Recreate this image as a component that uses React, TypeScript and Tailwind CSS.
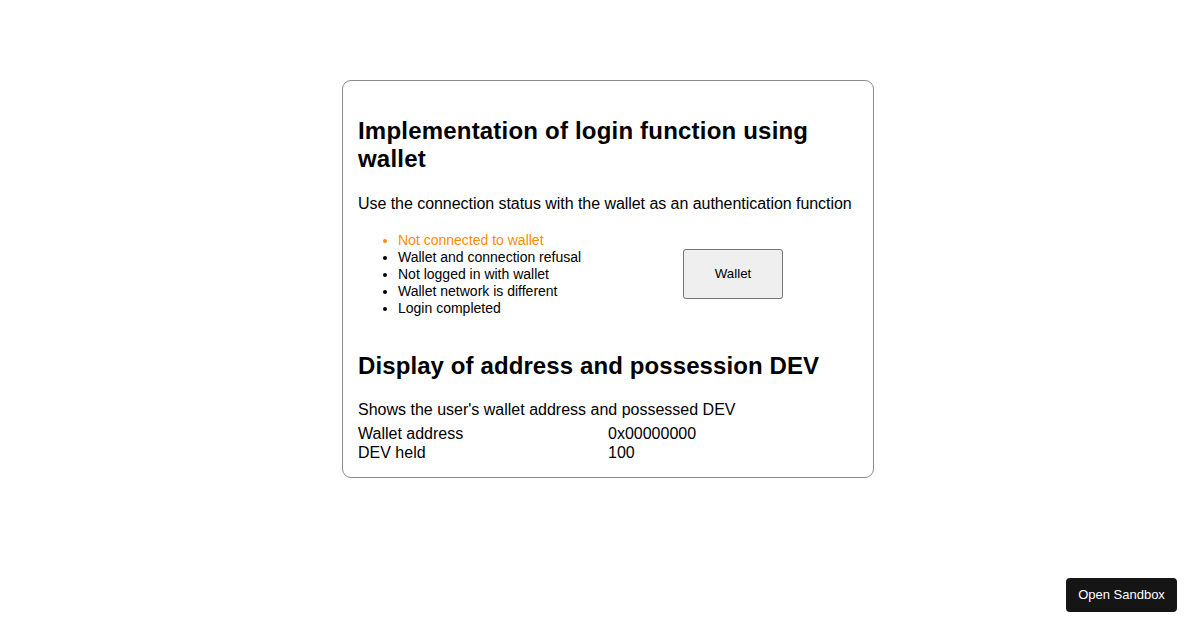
const statuses = [
  { label: 'Not connected to wallet', active: true },
  { label: 'Wallet and connection refusal', active: false },
  { label: 'Not logged in with wallet', active: false },
  { label: 'Wallet network is different', active: false },
  { label: 'Login completed', active: false },
]

export default function App() {
  return (
    <div className="relative h-[630px] w-[1200px] bg-white text-black" style={{ fontFamily: '"Liberation Sans", Arial, sans-serif' }}>
      <div className="absolute left-[342px] top-[80px] w-[532px] rounded-[9px] border border-[#8c8c8c] px-[15px] pb-[15px] pt-[16px]">
        <h2 className="mt-[20px] text-[24px] font-bold leading-[28px] tracking-[0.2px]">Implementation of login function using wallet</h2>
        <p className="mt-[22px] text-[16px] leading-[18px] tracking-[-0.05px]">Use the connection status with the wallet as an authentication function</p>

        <div className="mt-[19px] grid grid-cols-2 items-center">
          <ul className="list-disc pl-[40px] text-[14px] leading-[17px]">
            {statuses.map((s) => (
              <li key={s.label} className={s.active ? 'text-[#ff8c00]' : 'text-black'}>
                {s.label}
              </li>
            ))}
          </ul>
          <div className="mb-[2px] flex justify-center">
            <button className="h-[50px] w-[100px] rounded-[3px] border border-[#767676] bg-[#efefef] text-[13.3px] text-black">
              Wallet
            </button>
          </div>
        </div>

        <h2 className="mt-[35px] text-[24px] font-bold leading-[28px] tracking-[0.1px]">Display of address and possession DEV</h2>
        <p className="mt-[21px] text-[16px] leading-[18px]">Shows the user's wallet address and possessed DEV</p>
        <div className="mt-[5px] grid grid-cols-2 text-[16px] leading-[19px]">
          <div>Wallet address</div>
          <div>0x00000000</div>
          <div>DEV held</div>
          <div>100</div>
        </div>
      </div>

      <button className="absolute left-[1066px] top-[578px] h-[34px] w-[111px] rounded-[4px] bg-[#151515] text-[13px] text-white">
        Open Sandbox
      </button>
    </div>
  )
}
